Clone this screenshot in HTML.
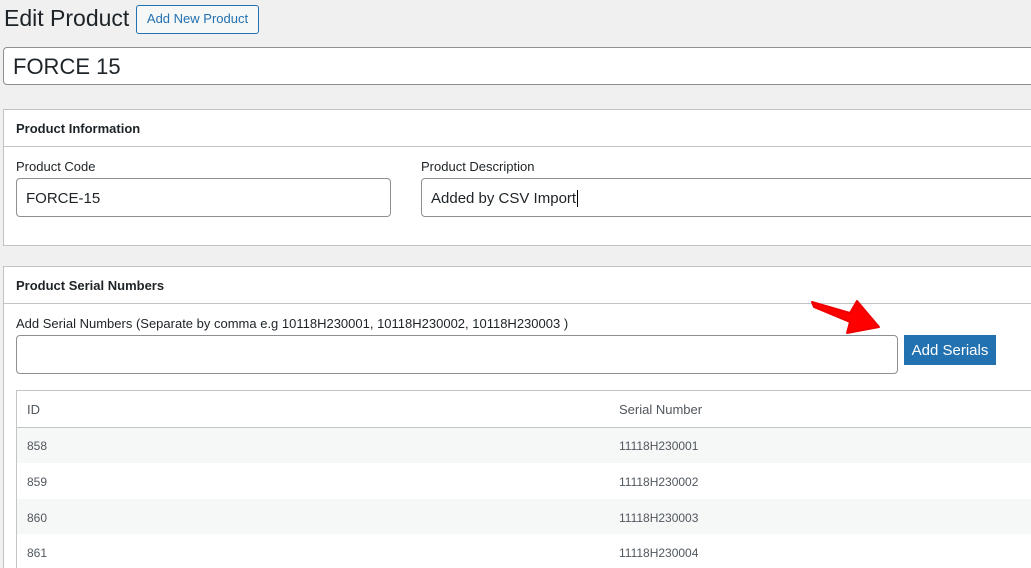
<!DOCTYPE html>
<html><head><style>
*{box-sizing:border-box;margin:0;padding:0}
html,body{width:1031px;height:568px;overflow:hidden}
body{background:#f0f0f1;font-family:"Segoe UI","Liberation Sans",sans-serif;color:#1d2327;position:relative}
.a{position:absolute}
.inp{position:absolute;background:#fff;border:1px solid #8c8f94;border-radius:4px}
.panel{position:absolute;background:#fff;border:1px solid #c3c4c7;left:3px;width:1040px}
.h{font-size:13px;font-weight:bold;left:16px;}
.lbl{font-size:13px}
td{font-size:12px;color:#50575e;padding-top:2px}
</style></head><body>
<div class="a" style="left:4px;top:5px;font-size:23px;">Edit Product</div>
<div class="a" style="left:136px;top:5px;width:123px;height:29px;border:1px solid #2271b1;border-radius:3px;background:#f6f7f7;color:#2271b1;font-size:13px;text-align:center;line-height:26px">Add New Product</div>
<div class="inp" style="left:3px;top:47px;width:1040px;height:38px;font-size:22px;padding-left:9px;line-height:38px">FORCE 15</div>

<div class="panel" style="top:109px;height:137px">
 <div class="a h" style="left:12px;top:11px">Product Information</div>
 <div class="a" style="left:0;top:36px;width:100%;border-top:1px solid #c3c4c7"></div>
 <div class="a lbl" style="left:12px;top:49px">Product Code</div>
 <div class="a lbl" style="left:417px;top:49px">Product Description</div>
</div>
<div class="inp" style="left:16px;top:178px;width:375px;height:39px;font-size:15px;padding-left:9px;line-height:39px">FORCE-15</div>
<div class="inp" style="left:421px;top:178px;width:640px;height:39px;font-size:15px;padding-left:9px;line-height:39px">Added by CSV Import<span style="border-left:1px solid #000;margin-left:1px"></span></div>

<div class="panel" style="top:266px;height:320px">
 <div class="a h" style="left:12px;top:11px">Product Serial Numbers</div>
 <div class="a" style="left:0;top:36px;width:100%;border-top:1px solid #c3c4c7"></div>
 <div class="a lbl" style="left:12px;top:49px">Add Serial Numbers (Separate by comma e.g 10118H230001, 10118H230002, 10118H230003 )</div>
</div>
<div class="inp" style="left:16px;top:335px;width:882px;height:39px"></div>
<div class="a" style="left:904px;top:335px;width:92px;height:30px;background:#2271b1;color:#fff;font-size:15px;text-align:center;line-height:31px">Add Serials</div>
<svg class="a" style="left:800px;top:295px" width="90" height="45"><polygon points="12,7 50,18 57,6 79,32 47,38 50,27 14,12" fill="#f00" stroke="#e00" stroke-linejoin="round" stroke-width="2"/></svg>

<div class="a" style="left:16px;top:390px;width:1030px;border:1px solid #c3c4c7;background:#fff">
<table style="border-collapse:collapse;width:100%">
<tr style="height:36px;border-bottom:1px solid #c3c4c7"><td style="width:602px;padding-left:10px;font-size:13px;color:#50575e">ID</td><td style="font-size:13px">Serial Number</td></tr>
<tr style="height:36px;background:#f6f7f7"><td style="padding-left:10px">858</td><td>11118H230001</td></tr>
<tr style="height:36px"><td style="padding-left:10px">859</td><td>11118H230002</td></tr>
<tr style="height:35px;background:#f6f7f7"><td style="padding-left:10px">860</td><td>11118H230003</td></tr>
<tr style="height:36px"><td style="padding-left:10px">861</td><td>11118H230004</td></tr>
</table></div>
</body></html>
